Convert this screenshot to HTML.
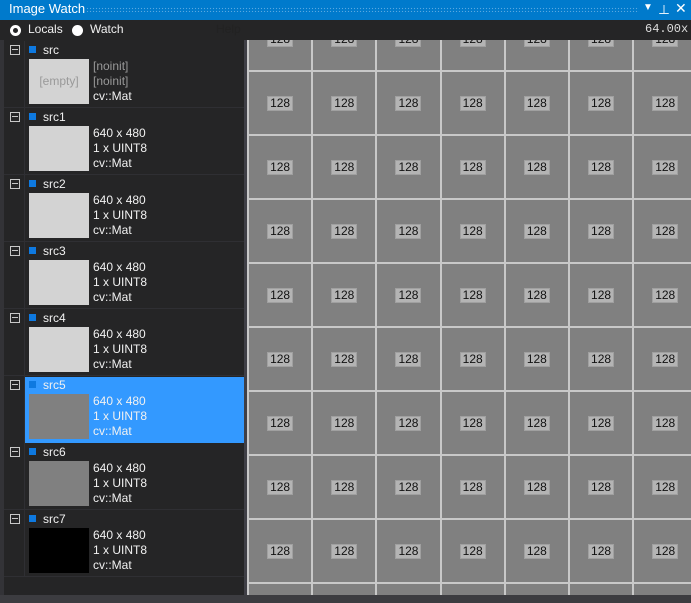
<!DOCTYPE html>
<html><head><meta charset="utf-8"><style>
*{margin:0;padding:0;box-sizing:border-box}
html,body{width:691px;height:603px;overflow:hidden}
body{background:#252526;font-family:"Segoe UI","Liberation Sans","Noto Sans CJK KR",sans-serif;position:relative;color:#f1f1f1}
.title{position:absolute;left:0;top:0;width:691px;height:20px;background:#007acc;}
.title .t{position:absolute;left:9px;top:1px;font-size:13px;color:#fff}
.dots{position:absolute;left:86px;right:52px;top:7px;height:5px;background-image:radial-gradient(circle,#59a8e0 0.7px,transparent 0.8px);background-size:3px 3px}
.tb{position:absolute;left:0;top:20px;width:691px;height:20px;background:#252526}
.a{position:absolute;font-size:12px}
.left{position:absolute;left:0;top:40px;width:244px;height:555px;background:#252526}
.strip{position:absolute;left:0;top:40px;width:4px;height:555px;background:#333337}
.row{position:absolute;left:4px;width:240px;height:67px;border-bottom:1px solid #2f2f33}
.tog{position:absolute;left:6px;top:4px;width:10px;height:10px;border:1px solid #c8c8c8}
.tog:after{content:"";position:absolute;left:1px;top:3px;width:6px;height:1px;background:#c8c8c8}
.vl{position:absolute;left:20px;top:0;width:1px;height:67px;background:#2f2f33}
.sq{position:absolute;left:25px;top:5px;width:7px;height:7px;background:#0e79e0}
.nm{position:absolute;left:39px;top:2px;font-size:12px;color:#f1f1f1}
.th{position:absolute;left:25px;top:18px;width:60px;height:45px;background:#d3d3d3;color:#999;font-size:12px;text-align:center;line-height:45px}
.inf{position:absolute;left:89px;top:18px;font-size:12px;line-height:15px;color:#f1f1f1}
.gw{position:absolute;left:247px;top:40px;width:444px;height:555px;overflow:hidden;background:#808080}
.g{position:absolute;left:0;top:-34px;width:520px;height:640px;overflow:hidden;display:flex;flex-wrap:wrap}
.c{width:64.2px;height:64px;border-left:2px solid #c8c8c8;border-top:2px solid #c8c8c8;background:#808080;display:flex;align-items:center;justify-content:center}
.c span{background:#b4b4b4;border:1px solid #a0a0a0;font-size:12px;color:#111;padding:0 2px;line-height:13px}
.bot{position:absolute;left:0;top:595px;width:691px;height:8px;background:#3c3c40}
.sb{position:absolute;left:244px;top:40px;width:3px;height:555px;background:#3f3f46}
</style></head><body>
<div class="title"><span class="t">Image Watch</span><div class="dots"></div>
<span style="position:absolute;left:643px;top:2px;color:#fff;font-size:10px">▼</span>
<span style="position:absolute;left:658px;top:1px;color:#fff;font-size:12px">⊥</span>
<span style="position:absolute;left:675px;top:0px;color:#fff;font-size:14px">✕</span></div>
<div class="tb">
<div style="position:absolute;left:10px;top:5px;width:11px;height:11px;border-radius:50%;background:#fff"><div style="position:absolute;left:3px;top:3px;width:5px;height:5px;border-radius:50%;background:#252526"></div></div>
<span class="a" style="left:28px;top:2px">Locals</span>
<div style="position:absolute;left:72px;top:5px;width:11px;height:11px;border-radius:50%;background:#fff"></div>
<span class="a" style="left:90px;top:2px">Watch</span>
<span class="a" style="left:216px;top:2px;color:#222">Help</span>
<span class="a" style="left:645px;top:2px;font-family:'Liberation Mono',monospace;font-size:12px;color:#ddd">64.00x</span>
</div>
<div class="left"></div><div class="strip"></div>
<div class="row" style="top:41px"><div class="tog"></div><div class="vl"></div><div class="sq"></div><div class="nm">src</div><div class="th">[empty]</div><div class="inf"><span style="color:#999">[noinit]<br>[noinit]</span><br>cv::Mat</div></div>
<div class="row" style="top:108px"><div class="tog"></div><div class="vl"></div><div class="sq"></div><div class="nm">src1</div><div class="th"></div><div class="inf">640 x 480<br>1 x UINT8<br>cv::Mat</div></div>
<div class="row" style="top:175px"><div class="tog"></div><div class="vl"></div><div class="sq"></div><div class="nm">src2</div><div class="th"></div><div class="inf">640 x 480<br>1 x UINT8<br>cv::Mat</div></div>
<div class="row" style="top:242px"><div class="tog"></div><div class="vl"></div><div class="sq"></div><div class="nm">src3</div><div class="th"></div><div class="inf">640 x 480<br>1 x UINT8<br>cv::Mat</div></div>
<div class="row" style="top:309px"><div class="tog"></div><div class="vl"></div><div class="sq"></div><div class="nm">src4</div><div class="th"></div><div class="inf">640 x 480<br>1 x UINT8<br>cv::Mat</div></div>
<div style="position:absolute;left:25px;top:377px;width:219px;height:66px;background:#3399ff"></div>
<div class="row" style="top:376px;border-bottom:none"><div class="tog"></div><div class="vl"></div><div class="sq"></div><div class="nm">src5</div><div class="th" style="background:#808080"></div><div class="inf">640 x 480<br>1 x UINT8<br>cv::Mat</div></div>
<div class="row" style="top:443px"><div class="tog"></div><div class="vl"></div><div class="sq"></div><div class="nm">src6</div><div class="th" style="background:#808080"></div><div class="inf">640 x 480<br>1 x UINT8<br>cv::Mat</div></div>
<div class="row" style="top:510px"><div class="tog"></div><div class="vl"></div><div class="sq"></div><div class="nm">src7</div><div class="th" style="background:#000"></div><div class="inf">640 x 480<br>1 x UINT8<br>cv::Mat</div></div>
<div class="sb"></div>
<div class="gw"><div class="g">
<div class="c"><span>128</span></div><div class="c"><span>128</span></div><div class="c"><span>128</span></div><div class="c"><span>128</span></div><div class="c"><span>128</span></div><div class="c"><span>128</span></div><div class="c"><span>128</span></div><div class="c"><span>128</span></div>
<div class="c"><span>128</span></div><div class="c"><span>128</span></div><div class="c"><span>128</span></div><div class="c"><span>128</span></div><div class="c"><span>128</span></div><div class="c"><span>128</span></div><div class="c"><span>128</span></div><div class="c"><span>128</span></div>
<div class="c"><span>128</span></div><div class="c"><span>128</span></div><div class="c"><span>128</span></div><div class="c"><span>128</span></div><div class="c"><span>128</span></div><div class="c"><span>128</span></div><div class="c"><span>128</span></div><div class="c"><span>128</span></div>
<div class="c"><span>128</span></div><div class="c"><span>128</span></div><div class="c"><span>128</span></div><div class="c"><span>128</span></div><div class="c"><span>128</span></div><div class="c"><span>128</span></div><div class="c"><span>128</span></div><div class="c"><span>128</span></div>
<div class="c"><span>128</span></div><div class="c"><span>128</span></div><div class="c"><span>128</span></div><div class="c"><span>128</span></div><div class="c"><span>128</span></div><div class="c"><span>128</span></div><div class="c"><span>128</span></div><div class="c"><span>128</span></div>
<div class="c"><span>128</span></div><div class="c"><span>128</span></div><div class="c"><span>128</span></div><div class="c"><span>128</span></div><div class="c"><span>128</span></div><div class="c"><span>128</span></div><div class="c"><span>128</span></div><div class="c"><span>128</span></div>
<div class="c"><span>128</span></div><div class="c"><span>128</span></div><div class="c"><span>128</span></div><div class="c"><span>128</span></div><div class="c"><span>128</span></div><div class="c"><span>128</span></div><div class="c"><span>128</span></div><div class="c"><span>128</span></div>
<div class="c"><span>128</span></div><div class="c"><span>128</span></div><div class="c"><span>128</span></div><div class="c"><span>128</span></div><div class="c"><span>128</span></div><div class="c"><span>128</span></div><div class="c"><span>128</span></div><div class="c"><span>128</span></div>
<div class="c"><span>128</span></div><div class="c"><span>128</span></div><div class="c"><span>128</span></div><div class="c"><span>128</span></div><div class="c"><span>128</span></div><div class="c"><span>128</span></div><div class="c"><span>128</span></div><div class="c"><span>128</span></div>
<div class="c"><span>128</span></div><div class="c"><span>128</span></div><div class="c"><span>128</span></div><div class="c"><span>128</span></div><div class="c"><span>128</span></div><div class="c"><span>128</span></div><div class="c"><span>128</span></div><div class="c"><span>128</span></div>
</div></div>
<div class="bot"></div>
</body></html>
